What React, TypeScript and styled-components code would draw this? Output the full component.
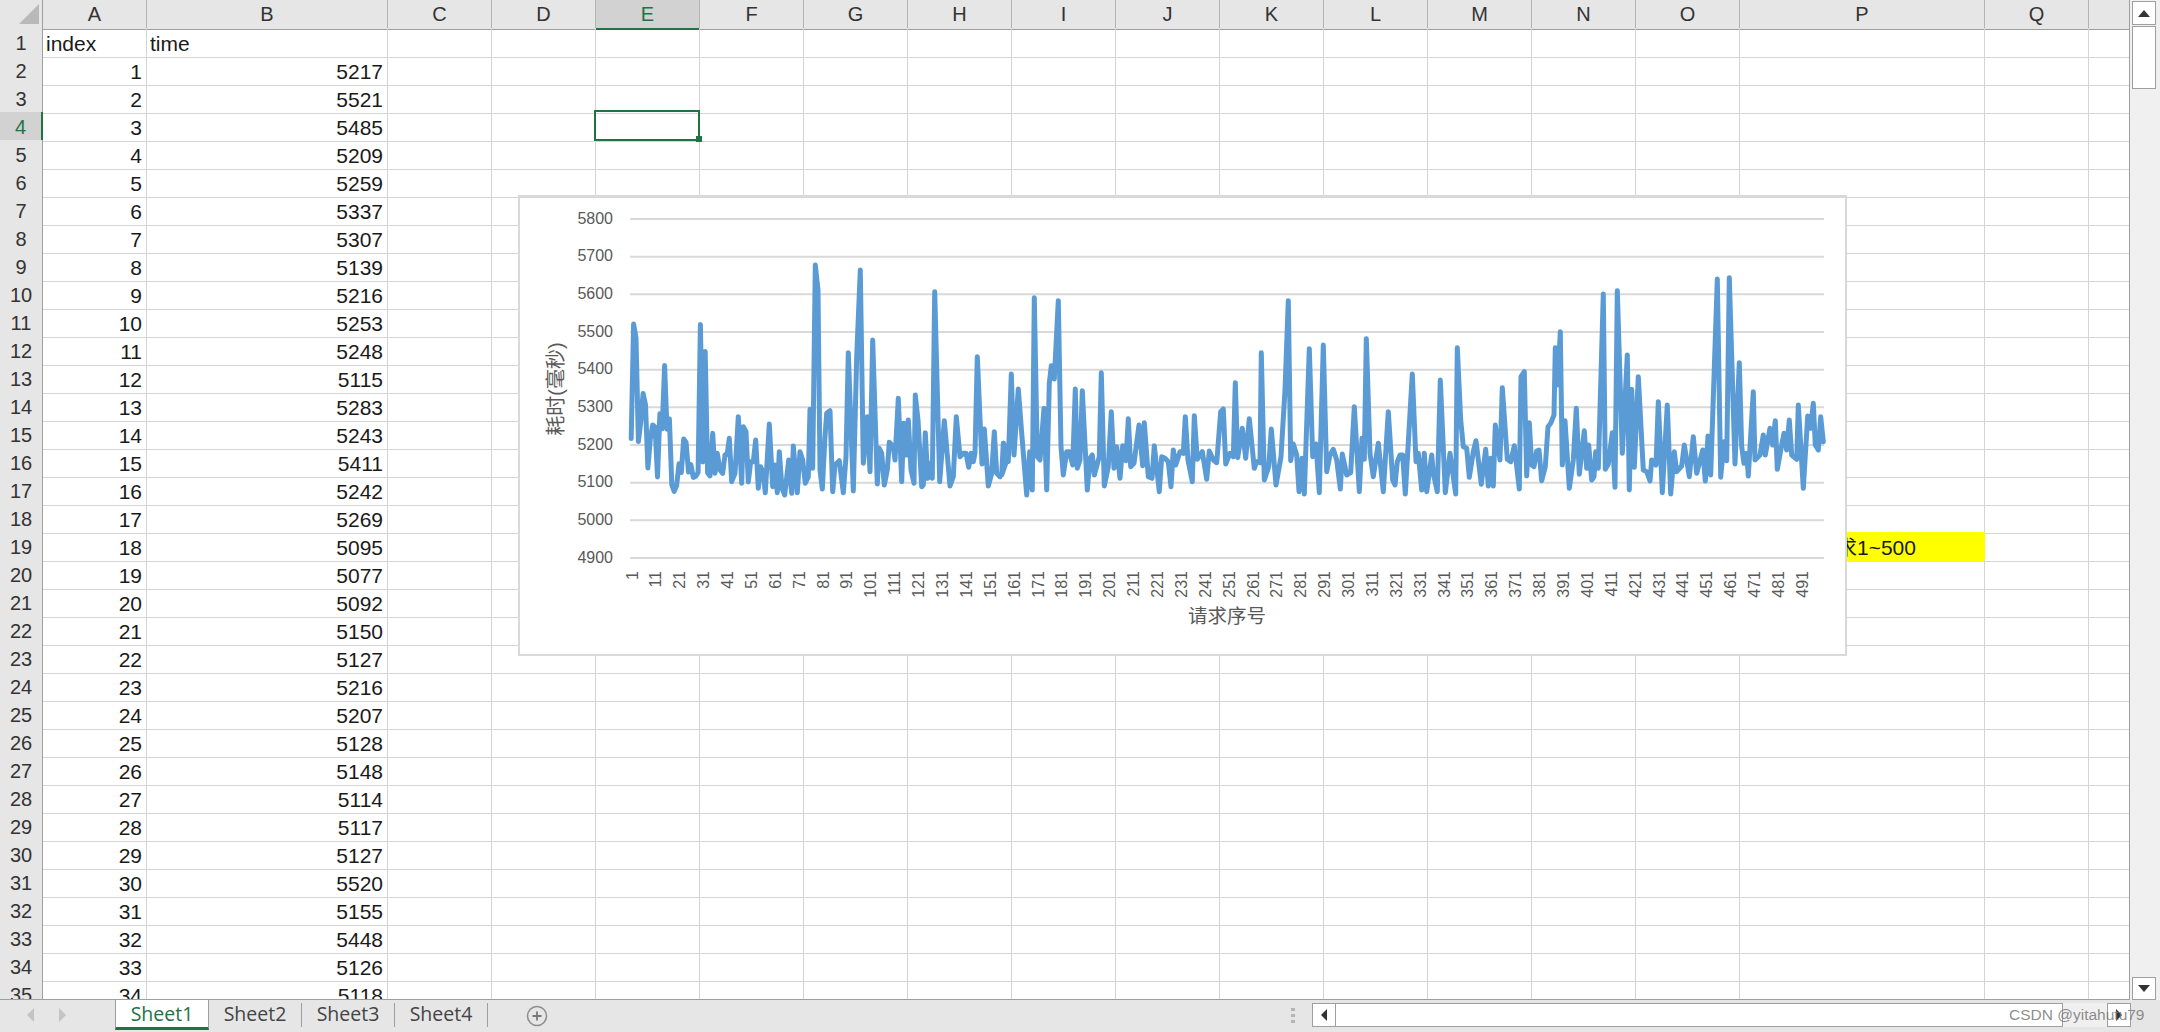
import React from 'react';
import styled, { createGlobalStyle } from 'styled-components';

const GREEN = '#217346';
const GRID = '#d4d4d4';
const HDR = '#e6e6e6';
const EDGE = '#9f9f9f';
const COLUMNS = '43px 104px 241px repeat(13, 104px) 245px 104px 104px';
const FONT = '"Liberation Sans", "Noto Sans CJK SC", Arial, sans-serif';

const Global = createGlobalStyle`
  html, body { margin: 0; padding: 0; background: #fff; }
  * { box-sizing: border-box; }
`;

const Page = styled.div`
  width: 2160px;
  height: 1032px;
  display: flex;
  flex-direction: column;
  overflow: hidden;
  position: relative;
  font-family: ${FONT};
  background: ${HDR};
`;
const WorkArea = styled.div`
  height: 1000px;
  display: flex;
`;
const Sheet = styled.div`
  position: relative;
  width: 2130px;
  height: 1000px;
  overflow: hidden;
  background: #fff;
  border-right: 1px solid ${EDGE};
  border-bottom: 1px solid ${EDGE};
`;
const Row = styled.div`
  display: grid;
  grid-template-columns: ${COLUMNS};
  height: 28px;
`;
const Corner = styled.div`
  background: ${HDR};
  border-right: 1px solid ${EDGE};
  border-bottom: 1px solid ${EDGE};
  display: flex;
  align-items: flex-start;
  justify-content: flex-end;
  padding: 4px 3px 0 0;
`;
const ColHead = styled.div<{ $active?: boolean }>`
  background: ${p => (p.$active ? '#d2d2d2' : HDR)};
  color: ${p => (p.$active ? GREEN : '#333')};
  border-right: 1px solid #b4b4b4;
  border-bottom: ${p => (p.$active ? `2px solid ${GREEN}` : `1px solid ${EDGE}`)};
  text-align: center;
  font-size: 20px;
  line-height: 28px;
`;
const RowHead = styled.div<{ $active?: boolean }>`
  background: ${p => (p.$active ? '#d2d2d2' : HDR)};
  color: ${p => (p.$active ? GREEN : '#333')};
  border-right: ${p => (p.$active ? `2px solid ${GREEN}` : `1px solid ${EDGE}`)};
  border-bottom: 1px solid #b4b4b4;
  text-align: center;
  padding-top: 2px;
  font-size: 20px;
  line-height: 27px;
`;
const Cell = styled.div<{ $num?: boolean }>`
  border-right: 1px solid ${GRID};
  border-bottom: 1px solid ${GRID};
  color: #1a1a1a;
  font-size: 21px;
  line-height: 27px;
  padding: 2px ${p => (p.$num ? '4px' : '3px')} 0 3px;
  text-align: ${p => (p.$num ? 'right' : 'left')};
  white-space: nowrap;
`;
const YellowCell = styled(Cell)`
  background: #ffff00;
  border-color: #ffff00;
  padding-left: 75px;
`;
const Selection = styled.div`
  position: absolute;
  left: 594px;
  top: 110px;
  width: 106px;
  height: 31px;
  border: 2px solid ${GREEN};
`;
const Handle = styled.div`
  position: absolute;
  right: -4px;
  bottom: -3px;
  width: 6px;
  height: 6px;
  background: ${GREEN};
`;
const Chart = styled.div`
  position: absolute;
  left: 518px;
  top: 195px;
  width: 1329px;
  height: 461px;
  background: #fff;
  border: 2px solid #d9d9d9;
  border-top-width: 3px;
`;
const ChartSvg = styled.svg`
  display: block;
  font-family: ${FONT};
`;
const VBar = styled.div`
  width: 30px;
  height: 1000px;
  background: #f0f0f0;
  display: flex;
  flex-direction: column;
  padding: 1px 4px 0 2px;
`;
const ScrollBtn = styled.div<{ $h?: number }>`
  width: 24px;
  height: ${p => p.$h ?? 24}px;
  flex: none;
  background: #fff;
  border: 1px solid ${EDGE};
  display: flex;
  align-items: center;
  justify-content: center;
`;
const VThumb = styled.div`
  height: 63px;
  margin-top: 1px;
  background: #fff;
  border: 1px solid ${EDGE};
`;
const Spacer = styled.div`
  flex: 1;
`;
const TabBar = styled.div`
  height: 32px;
  display: flex;
  align-items: flex-start;
  background: ${HDR};
  padding-right: 29px;
`;
const NavArrows = styled.div`
  width: 115px;
  height: 30px;
  display: flex;
  align-items: center;
  padding-left: 27px;
  gap: 24px;
`;
const ActiveTab = styled.div`
  width: 94px;
  height: 30px;
  background: #fff;
  border: 1px solid ${EDGE};
  border-top: none;
  border-bottom: 3px solid ${GREEN};
  color: ${GREEN};
  font-family: "Open Sans", sans-serif;
  font-size: 19.5px;
  line-height: 27px;
  text-align: center;
`;
const Tab = styled.div`
  width: 93px;
  height: 24px;
  margin-top: 3px;
  border-right: 1px solid ${EDGE};
  color: #444;
  font-family: "Open Sans", sans-serif;
  font-size: 19.5px;
  line-height: 21px;
  text-align: center;
`;
const AddSheet = styled.div`
  margin: 5px 0 0 38px;
  width: 22px;
  height: 22px;
`;
const Dots = styled.div`
  margin: 8px 17px 0 auto;
  width: 4px;
  height: 15px;
  background: repeating-linear-gradient(to bottom, #b4b4b4 0 3px, transparent 3px 6px);
`;
const HBar = styled.div`
  width: 819px;
  height: 24px;
  margin-top: 3px;
  display: flex;
  background: #f0f0f0;
`;
const HThumb = styled.div`
  width: 727px;
  background: #fff;
  border: 1px solid ${EDGE};
  border-left: none;
`;
const Watermark = styled.div`
  position: absolute;
  left: 2009px;
  top: 1006px;
  font-size: 15.5px;
  line-height: 18px;
  color: rgba(120, 120, 120, 0.85);
  white-space: nowrap;
`;

const LETTERS = 'ABCDEFGHIJKLMNOPQR'.split('');
const TIMES = [5217,5521,5485,5209,5259,5337,5307,5139,5216,5253,5248,5115,5283,5243,5411,5242,5269,5095,5077,5092,5150,5127,5216,5207,5128,5148,5114,5117,5127,5520,5155,5448,5126,5118];

/* trace of the reference curve after row 35, as [x, y] on three 3x crops */
const TRACE_A = [608,730,615,850,622,790,630,840,638,850,645,795,652,790,658,745,665,875,675,850,685,680,695,880,700,710,708,725,715,876,722,815,730,815,737,750,745,895,752,830,760,850,766,908,778,702,788,890,795,825,802,908,808,785,816,895,824,915,836,810,845,910,850,768,862,908,870,785,878,810,886,880,895,860,900,658,908,835,916,225,924,300,930,840,937,897,945,740,950,670,960,662,968,905,975,825,988,812,1000,908,1008,800,1015,488,1030,903,1040,500,1051,240,1060,820,1072,680,1080,845,1088,450,1102,882,1108,775,1115,790,1123,885,1132,840,1138,757,1150,770,1155,810,1165,625,1175,875,1181,700,1188,795,1195,690,1203,840,1212,880,1216,615,1224,690,1235,890,1240,885,1246,728,1253,865,1260,820,1267,865,1274,305,1289,875,1303,692,1320,888,1330,860,1339,680,1350,800,1360,790,1368,790,1376,832,1383,790,1390,815,1395,790,1402,500,1416,822,1423,717,1435,888,1445,850,1453,725,1460,850,1470,860,1476,850,1481,760,1490,812];
const TRACE_B = [5,855,10,760,25,815,34,552,42,795,55,597,65,730,80,915,89,785,97,900,103,323,112,800,120,810,132,655,140,900,148,580,154,527,163,567,175,332,183,770,190,855,200,785,208,785,218,825,226,597,232,835,240,810,247,602,262,900,270,805,277,795,283,855,298,800,304,548,313,888,325,830,334,665,342,835,350,770,360,865,368,767,378,812,385,686,392,830,402,820,406,790,417,705,428,827,433,698,445,860,456,865,463,767,478,905,485,800,495,805,505,815,513,890,520,780,527,825,540,785,550,790,556,680,564,810,577,875,583,677,592,808,607,785,620,868,628,783,640,810,650,818,662,665,670,657,677,822,690,790,700,800,706,578,713,803,727,715,737,805,748,686,763,835,770,815,780,818,784,488,793,870,806,830,814,717,828,885,843,800,855,600,865,332,872,812,880,762,890,795,897,905,906,805,913,912,928,476,938,800,948,762,958,908,970,465,980,845,990,795,1000,778,1010,810,1021,897,1027,792,1040,855,1052,848,1063,650,1078,905,1086,745,1093,808,1099,446,1110,790,1120,860,1135,760,1150,905,1165,665,1178,870,1185,885,1192,815,1200,795,1208,795,1216,912,1237,552,1248,815,1255,790,1265,900,1273,790,1280,905,1295,795,1300,850,1312,905];
const TRACE_C = [61,570,76,908,90,790,107,912,112,473,122,690,130,770,140,775,148,862,160,785,168,752,184,883,197,778,205,888,212,805,220,888,226,705,240,810,247,593,262,808,272,815,283,767,298,897,303,560,313,545,320,858,328,698,335,825,342,830,350,783,357,780,365,872,376,830,384,710,392,700,402,675,406,473,413,585,421,425,427,825,435,692,448,895,460,810,469,655,478,853,493,722,500,835,506,765,515,870,522,860,527,785,535,835,550,312,556,838,565,822,577,728,585,892,592,302,607,790,622,495,628,900,635,598,643,832,655,560,670,840,680,845,690,873,695,810,708,825,715,635,727,908,742,645,752,912,763,785,770,845,785,828,793,765,808,860,820,740,830,850,848,780,856,873,864,738,872,855,892,267,902,862,912,755,920,812,928,263,945,822,958,518,965,770,972,820,980,790,985,858,1000,605,1005,810,1020,795,1030,735,1036,795,1050,715,1058,765,1066,692,1072,838,1085,765,1092,730,1100,780,1108,690,1115,795,1130,808,1135,645,1150,895,1163,678,1172,715,1180,640,1186,765,1195,780,1202,680,1210,755];

const yOf = (v: number) => 219 + (5800 - v) * (339 / 900);
const head = TIMES.map((v, i) => `${(630 + (i + 0.5) * 2.388).toFixed(1)},${yOf(v).toFixed(1)}`);
const traced = (t: number[], base: number) => {
  const out: string[] = [];
  for (let i = 0; i < t.length; i += 2) {
    out.push(`${(base + t[i] / 3).toFixed(1)},${(190 + t[i + 1] / 3).toFixed(1)}`);
  }
  return out;
};
const LINE = [...head, ...traced(TRACE_A, 510), ...traced(TRACE_B, 1000), ...traced(TRACE_C, 1420)].join(' ');
const TICKS = [5800, 5700, 5600, 5500, 5400, 5300, 5200, 5100, 5000, 4900];
const XLABELS = Array.from({ length: 50 }, (_, i) => i * 10 + 1);

const LineChart = () => (
  <ChartSvg width={1325} height={456} viewBox="520 198 1325 456">
    {TICKS.map(t => (
      <g key={t}>
        <line x1={630} x2={1824} y1={yOf(t)} y2={yOf(t)} stroke="#d9d9d9" strokeWidth={2} />
        <text x={613} y={yOf(t) + 4.5} textAnchor="end" fontSize={16} fill="#595959">{t}</text>
      </g>
    ))}
    <polyline points={LINE} fill="none" stroke="#5b9bd5" strokeWidth={5} strokeLinejoin="round" strokeLinecap="round" />
    {XLABELS.map(n => {
      const x = 632 + ((n - 1) / 10) * 23.885 + 5.5;
      return (
        <text key={n} x={x} y={571} textAnchor="end" fontSize={16} fill="#595959" transform={`rotate(-90 ${x} 571)`}>{n}</text>
      );
    })}
    <text x={563} y={389} textAnchor="middle" fontSize={20} fill="#595959" transform="rotate(-90 563 389)">耗时(毫秒)</text>
    <text x={1227} y={623} textAnchor="middle" fontSize={19.5} fill="#595959">请求序号</text>
  </ChartSvg>
);

const Arrow = ({ d, w = 12, h = 12, fill = '#333' }: { d: string; w?: number; h?: number; fill?: string }) => (
  <svg width={w} height={h} viewBox={`0 0 ${w} ${h}`}><polygon points={d} fill={fill} /></svg>
);

const blanks = (from: number, to: number) =>
  LETTERS.slice(from, to).map(l => <Cell key={l} />);

const App = () => (
  <Page>
    <Global />
    <WorkArea>
      <Sheet>
        <Row>
          <Corner>
            <svg width={20} height={20} viewBox="0 0 20 20"><polygon points="0,20 20,20 20,0" fill="#b9b9b9" /></svg>
          </Corner>
          {LETTERS.map(l => <ColHead key={l} $active={l === 'E'}>{l === 'R' ? '' : l}</ColHead>)}
        </Row>
        <Row>
          <RowHead>1</RowHead>
          <Cell>index</Cell>
          <Cell>time</Cell>
          {blanks(2, 18)}
        </Row>
        {TIMES.map((t, i) => (
          <Row key={i}>
            <RowHead $active={i + 2 === 4}>{i + 2}</RowHead>
            <Cell $num>{i + 1}</Cell>
            <Cell $num>{t}</Cell>
            {i + 2 === 19 ? (
              <>
                {blanks(2, 15)}
                <YellowCell>请求1~500</YellowCell>
                {blanks(16, 18)}
              </>
            ) : blanks(2, 18)}
          </Row>
        ))}
        <Selection><Handle /></Selection>
        <Chart><LineChart /></Chart>
      </Sheet>
      <VBar>
        <ScrollBtn><Arrow d="0,7 6,0 12,7" h={7} /></ScrollBtn>
        <VThumb />
        <Spacer />
        <ScrollBtn $h={23}><Arrow d="0,0 12,0 6,7" h={7} /></ScrollBtn>
      </VBar>
    </WorkArea>
    <TabBar>
      <NavArrows>
        <Arrow d="7,0 7,14 0,7" w={8} h={14} fill="#c4c4c4" />
        <Arrow d="0,0 0,14 7,7" w={8} h={14} fill="#c4c4c4" />
      </NavArrows>
      <ActiveTab>Sheet1</ActiveTab>
      <Tab>Sheet2</Tab>
      <Tab>Sheet3</Tab>
      <Tab>Sheet4</Tab>
      <AddSheet>
        <svg width={22} height={22} viewBox="0 0 22 22">
          <circle cx={11} cy={11} r={9.5} fill="none" stroke="#8f8f8f" strokeWidth={1.6} />
          <path d="M11 6.5v9M6.5 11h9" stroke="#777" strokeWidth={1.8} />
        </svg>
      </AddSheet>
      <Dots />
      <HBar>
        <ScrollBtn><Arrow d="6,0 6,12 0,6" w={7} /></ScrollBtn>
        <HThumb />
        <Spacer />
        <ScrollBtn><Arrow d="0,0 0,12 6,6" w={7} /></ScrollBtn>
      </HBar>
    </TabBar>
    <Watermark>CSDN @yitahutu79</Watermark>
  </Page>
);

export default App;
